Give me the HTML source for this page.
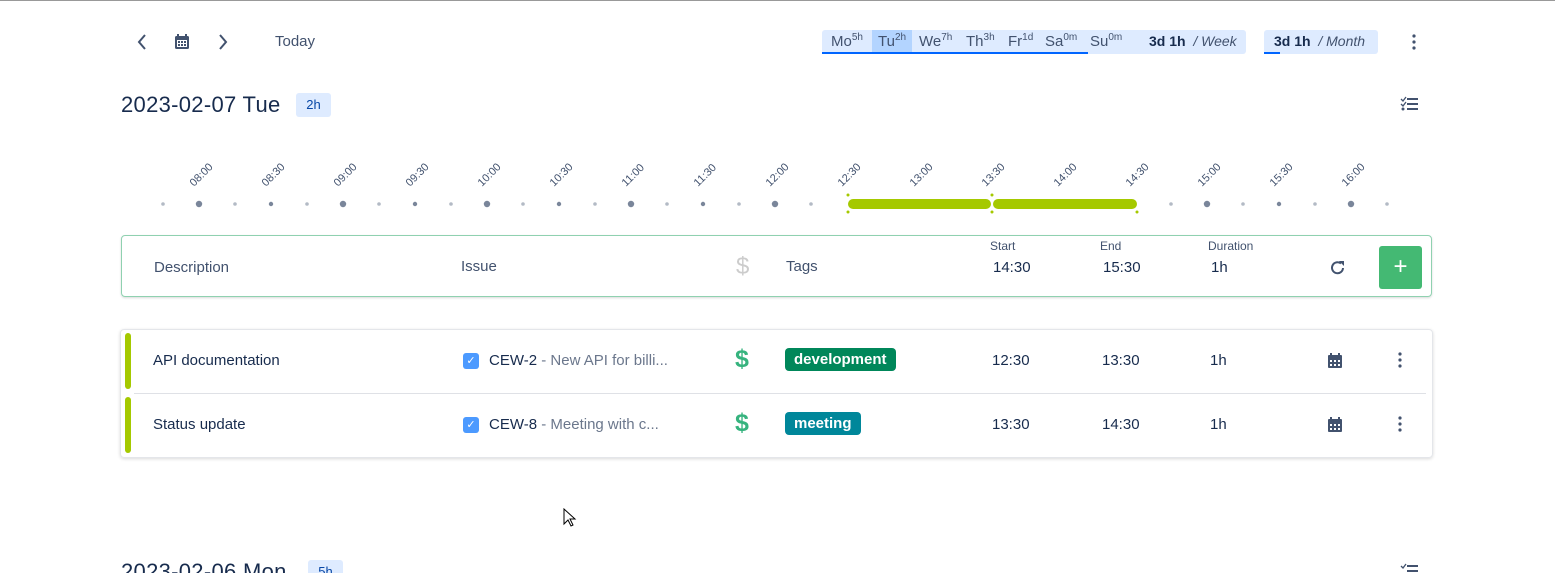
<!DOCTYPE html>
<html><head><meta charset="utf-8"><style>
*{margin:0;padding:0;box-sizing:border-box}
html,body{width:1555px;height:573px;overflow:hidden}
body{background:#fff;font-family:"Liberation Sans",sans-serif;color:#172b4d;position:relative;border-top:1px solid #999}
.a{position:absolute;white-space:nowrap}
.t15{font-size:15px}
.hd{font-size:15px;color:#42526e}
.sm{font-size:12px;color:#42526e}
sup{font-size:10px}
</style></head><body>
<svg class="a" style="left:130px;top:30px" width="200" height="22">
<path d="M15 4 L9 11 L15 18" stroke="#42526e" stroke-width="2" fill="none"/>
<rect x="45" y="5" width="14" height="13" rx="1.5" fill="#42526e"/>
<rect x="47" y="9" width="10" height="7" fill="#fff"/>
<g fill="#42526e"><rect x="48" y="10" width="2" height="2"/><rect x="51" y="10" width="2" height="2"/><rect x="54" y="10" width="2" height="2"/><rect x="48" y="13" width="2" height="2"/><rect x="51" y="13" width="2" height="2"/><rect x="54" y="13" width="2" height="2"/></g>
<rect x="47" y="3" width="2" height="4" fill="#42526e"/><rect x="55" y="3" width="2" height="4" fill="#42526e"/>
<path d="M90 4 L96 11 L90 18" stroke="#42526e" stroke-width="2" fill="none"/>
</svg>
<div class="a hd" style="left:275px;top:32px">Today</div>
<div class="a" style="left:822px;top:29px;width:424px;height:24px;background:#deebff;border-radius:3px"></div>
<div class="a" style="left:872px;top:29px;width:40px;height:22px;background:#b3d4ff"></div>
<div class="a" style="left:822px;top:51px;width:266px;height:2px;background:#0065ff"></div>
<div class="a" style="left:822px;top:31px;font-size:15px;color:#42526e">
<span style="position:absolute;left:9px">Mo<sup>5h</sup></span><span style="position:absolute;left:56px">Tu<sup>2h</sup></span><span style="position:absolute;left:97px">We<sup>7h</sup></span><span style="position:absolute;left:144px">Th<sup>3h</sup></span><span style="position:absolute;left:186px">Fr<sup>1d</sup></span><span style="position:absolute;left:223px">Sa<sup>0m</sup></span><span style="position:absolute;left:268px">Su<sup>0m</sup></span></div>
<div class="a" style="left:1149px;top:32px;font-size:14px;color:#172b4d"><b>3d 1h</b> &nbsp;<i style="color:#42526e">/ Week</i></div>
<div class="a" style="left:1264px;top:29px;width:114px;height:24px;background:#deebff;border-radius:3px"></div>
<div class="a" style="left:1264px;top:51px;width:16px;height:2px;background:#0065ff"></div>
<div class="a" style="left:1274px;top:32px;font-size:14px;color:#172b4d"><b>3d 1h</b> &nbsp;<i style="color:#42526e">/ Month</i></div>
<svg class="a" style="left:1408px;top:33px" width="12" height="16"><circle cx="6" cy="2" r="1.6" fill="#42526e"/><circle cx="6" cy="8" r="1.6" fill="#42526e"/><circle cx="6" cy="14" r="1.6" fill="#42526e"/></svg>

<div class="a" style="left:121px;top:91px;font-size:22px;color:#172b4d;letter-spacing:0.3px">2023-02-07 Tue</div>
<div class="a" style="left:296px;top:92px;width:35px;height:24px;background:#deebff;border-radius:3px;font-size:13px;text-align:center;line-height:24px;color:#0747a6">2h</div>
<svg class="a" style="left:1400px;top:95px" width="20" height="16"><g fill="#42526e"><rect x="7" y="2" width="11" height="2"/><rect x="7" y="7" width="11" height="2"/><rect x="7" y="12" width="11" height="2"/><circle cx="3" cy="13" r="1.5"/></g><path d="M1 3 L3 5 L6 1 M1 8 L3 10 L6 6" stroke="#42526e" stroke-width="1.3" fill="none"/></svg>

<svg class="a" style="left:0;top:150px" width="1555" height="70" id="tl">
<g id="dots"></g>
<rect x="848" y="48" width="143" height="10" rx="5" fill="#a5c900"/>
<rect x="993" y="48" width="144" height="10" rx="5" fill="#a5c900"/>
<g fill="#a5c900"><circle cx="848" cy="44" r="1.5"/><circle cx="848" cy="61" r="1.5"/><circle cx="992" cy="44" r="1.5"/><circle cx="992" cy="61" r="1.5"/><circle cx="1137" cy="61" r="1.5"/></g>
</svg>
<script>
var g=document.getElementById('dots'),s='',times=['08:00','08:30','09:00','09:30','10:00','10:30','11:00','11:30','12:00','12:30','13:00','13:30','14:00','14:30','15:00','15:30','16:00'];
for(var i=0;i<=34;i++){var x=163+36*i;var r=i%4==1?3.2:(i%4==3?2.2:1.8);var c=i%2?'#7a869a':'#b3bac5';
if(!(x>845&&x<1140))s+='<circle cx="'+x+'" cy="53" r="'+r+'" fill="'+c+'"/>';
if(i%2==1){var t=times[(i-1)/2];s+='<text x="'+(x-5)+'" y="36" font-size="11" fill="#42526e" font-family="Liberation Sans" transform="rotate(-45 '+(x-5)+' 36)">'+t+'</text>';}}
g.innerHTML=s;
</script>

<div class="a" style="left:121px;top:234px;width:1311px;height:62px;border:1px solid #8fd1b0;border-radius:4px;box-shadow:0 1px 2px rgba(0,0,0,.15)"></div>
<div class="a hd" style="left:154px;top:258px">Description</div>
<div class="a hd" style="left:461px;top:257px">Issue</div>
<div class="a" style="left:736px;top:252px;font-size:24px;color:#ccc">$</div>
<div class="a hd" style="left:786px;top:257px">Tags</div>
<div class="a sm" style="left:990px;top:238px">Start</div>
<div class="a sm" style="left:1100px;top:238px">End</div>
<div class="a sm" style="left:1208px;top:238px">Duration</div>
<div class="a t15" style="left:993px;top:258px">14:30</div>
<div class="a t15" style="left:1103px;top:258px">15:30</div>
<div class="a t15" style="left:1211px;top:258px">1h</div>
<svg class="a" style="left:1329px;top:258px" width="18" height="18"><path d="M14 9 A5.5 5.5 0 1 1 12 4.5" stroke="#42526e" stroke-width="2" fill="none"/><path d="M10 2 L15 2 L15 7 Z" fill="#42526e"/></svg>
<div class="a" style="left:1379px;top:245px;width:43px;height:43px;background:#44b973;border-radius:3px;color:#fff;font-size:24px;text-align:center;line-height:42px">+</div>

<div class="a" style="left:120px;top:328px;width:1313px;height:129px;border:1px solid #e4e6ea;border-radius:4px;box-shadow:0 1px 3px rgba(0,0,0,.15)"></div>
<div class="a" style="left:134px;top:392px;width:1292px;height:1px;background:#dfe1e6"></div>
<div class="a" style="left:125px;top:332px;width:6px;height:56px;background:#a5c900;border-radius:3px"></div>
<div class="a" style="left:125px;top:396px;width:6px;height:56px;background:#a5c900;border-radius:3px"></div>

<div class="a t15" style="left:153px;top:351px">API documentation</div>
<div class="a t15" style="left:153px;top:415px">Status update</div>
<div class="a" style="left:463px;top:352px;width:16px;height:16px;background:#4c9aff;border-radius:3px;color:#fff;font-size:11px;text-align:center;line-height:16px">✓</div>
<div class="a" style="left:463px;top:416px;width:16px;height:16px;background:#4c9aff;border-radius:3px;color:#fff;font-size:11px;text-align:center;line-height:16px">✓</div>
<div class="a t15" style="left:489px;top:351px;color:#172b4d">CEW-2 <span style="color:#6b778c">- New API for billi...</span></div>
<div class="a t15" style="left:489px;top:415px;color:#172b4d">CEW-8 <span style="color:#6b778c">- Meeting with c...</span></div>
<div class="a" style="left:735px;top:344px;font-size:25px;color:#36b37e;font-weight:bold">$</div>
<div class="a" style="left:735px;top:408px;font-size:25px;color:#36b37e;font-weight:bold">$</div>
<div class="a" style="left:785px;top:347px;height:23px;padding:0 9px;background:#00875a;border-radius:4px;color:#fff;font-weight:bold;font-size:15px;line-height:23px">development</div>
<div class="a" style="left:785px;top:411px;height:23px;padding:0 9px;background:#00879a;border-radius:4px;color:#fff;font-weight:bold;font-size:15px;line-height:23px">meeting</div>
<div class="a t15" style="left:992px;top:351px">12:30</div>
<div class="a t15" style="left:1102px;top:351px">13:30</div>
<div class="a t15" style="left:1210px;top:351px">1h</div>
<div class="a t15" style="left:992px;top:415px">13:30</div>
<div class="a t15" style="left:1102px;top:415px">14:30</div>
<div class="a t15" style="left:1210px;top:415px">1h</div>
<svg class="a" style="left:1327px;top:351px" width="16" height="16"><rect x="1" y="3" width="14" height="13" rx="1" fill="#42526e"/><rect x="3" y="1" width="2" height="4" fill="#42526e"/><rect x="11" y="1" width="2" height="4" fill="#42526e"/><g fill="#fff"><rect x="3" y="8" width="2" height="2"/><rect x="7" y="8" width="2" height="2"/><rect x="11" y="8" width="2" height="2"/><rect x="3" y="12" width="2" height="2"/><rect x="7" y="12" width="2" height="2"/><rect x="11" y="12" width="2" height="2"/></g></svg>
<svg class="a" style="left:1327px;top:415px" width="16" height="16"><rect x="1" y="3" width="14" height="13" rx="1" fill="#42526e"/><rect x="3" y="1" width="2" height="4" fill="#42526e"/><rect x="11" y="1" width="2" height="4" fill="#42526e"/><g fill="#fff"><rect x="3" y="8" width="2" height="2"/><rect x="7" y="8" width="2" height="2"/><rect x="11" y="8" width="2" height="2"/><rect x="3" y="12" width="2" height="2"/><rect x="7" y="12" width="2" height="2"/><rect x="11" y="12" width="2" height="2"/></g></svg>
<svg class="a" style="left:1394px;top:351px" width="12" height="16"><circle cx="6" cy="2" r="1.6" fill="#42526e"/><circle cx="6" cy="8" r="1.6" fill="#42526e"/><circle cx="6" cy="14" r="1.6" fill="#42526e"/></svg>
<svg class="a" style="left:1394px;top:415px" width="12" height="16"><circle cx="6" cy="2" r="1.6" fill="#42526e"/><circle cx="6" cy="8" r="1.6" fill="#42526e"/><circle cx="6" cy="14" r="1.6" fill="#42526e"/></svg>

<svg class="a" style="left:563px;top:507px" width="14" height="20"><path d="M1 1 L1 16 L5 12 L8 18 L10 17 L7 11 L12 11 Z" fill="#fff" stroke="#000" stroke-width="1"/></svg>

<div class="a" style="left:121px;top:558px;font-size:22px;color:#172b4d;letter-spacing:0.3px">2023-02-06 Mon</div>
<div class="a" style="left:308px;top:559px;width:35px;height:24px;background:#deebff;border-radius:3px;font-size:13px;text-align:center;line-height:24px;color:#0747a6">5h</div>
<svg class="a" style="left:1400px;top:562px" width="20" height="16"><g fill="#42526e"><rect x="7" y="2" width="11" height="2"/><rect x="7" y="7" width="11" height="2"/></g><path d="M1 3 L3 5 L6 1" stroke="#42526e" stroke-width="1.3" fill="none"/></svg>
</body></html>
